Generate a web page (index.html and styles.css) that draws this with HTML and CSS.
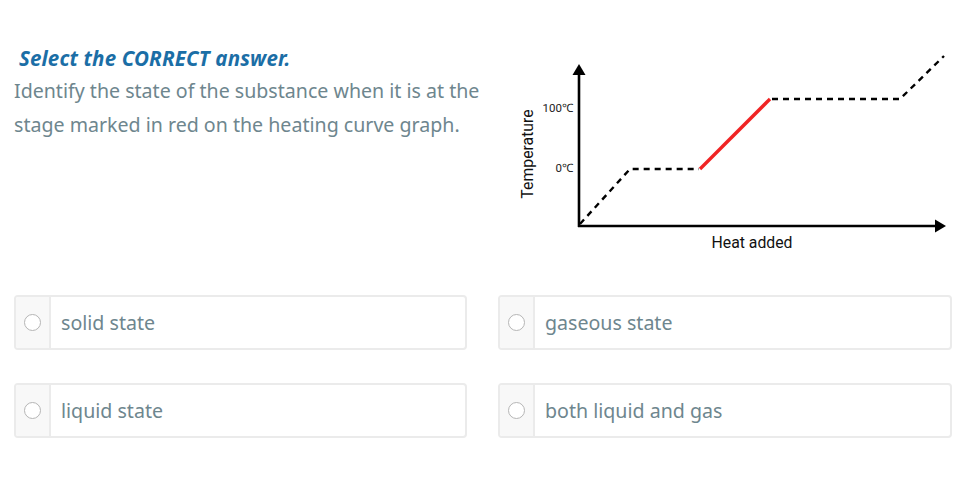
FILE: index.html
```html
<!DOCTYPE html>
<html lang="en">
<head>
  <meta charset="UTF-8" />
  <meta name="viewport" content="width=device-width, initial-scale=1" />
  <title>Heating curve question</title>
  <link rel="stylesheet" href="styles.css">
</head>
<body>
  <div class="question">
    <div class="prompt">
      <div class="prompt-text">
        <h2 class="instruction">Select the CORRECT answer.</h2>
        <p class="stem">Identify the state of the substance when it is at the stage marked in red on the heating curve graph.</p>
      </div>

      <!-- heating curve graph -->
      <svg class="graph" width="440" height="215" viewBox="0 0 440 215">
        <line x1="69" y1="185" x2="69" y2="32" stroke="#000" stroke-width="2.6" />
        <polygon points="62.5,33 75.5,33 69,22" fill="#000" />
        <line x1="68" y1="184" x2="426" y2="184" stroke="#000" stroke-width="2.6" />
        <polygon points="425,177.5 425,190.5 436,184" fill="#000" />

        <polyline points="70,182 120,127 189,127" fill="none" stroke="#000" stroke-width="2.4" stroke-dasharray="6 5" />
        <line x1="190" y1="127" x2="260" y2="57" stroke="#f02424" stroke-width="3.4" />
        <polyline points="262,57 390,57 434,14" fill="none" stroke="#000" stroke-width="2.4" stroke-dasharray="6 5" />

        <text class="tick" x="63" y="70" text-anchor="end">100℃</text>
        <text class="tick" x="63" y="130" text-anchor="end">0℃</text>
        <text class="axis-label" x="0" y="0" text-anchor="middle" transform="translate(23 112) rotate(-90)">Temperature</text>
        <text class="axis-label" x="242" y="206" text-anchor="middle">Heat added</text>
      </svg>
    </div>

    <div class="choices">
      <label class="choice">
        <span class="choice-mark"><span class="radio"></span></span>
        <span class="choice-text">solid state</span>
      </label>
      <label class="choice">
        <span class="choice-mark"><span class="radio"></span></span>
        <span class="choice-text">gaseous state</span>
      </label>
      <label class="choice">
        <span class="choice-mark"><span class="radio"></span></span>
        <span class="choice-text">liquid state</span>
      </label>
      <label class="choice">
        <span class="choice-mark"><span class="radio"></span></span>
        <span class="choice-text">both liquid and gas</span>
      </label>
    </div>
  </div>
</body>
</html>
```

FILE: styles.css
```css
body {
  margin: 0;
  background: #fff;
  font-family: "Noto Sans", "Open Sans", sans-serif;
}

.question {
  padding: 42px 4px 0 14px;
}

.prompt {
  display: flex;
  align-items: flex-start;
}

.prompt-text {
  width: 482px;
  flex: none;
}

.instruction {
  margin: 0 0 0 5px;
  font-size: 20.5px;
  line-height: 32px;
  font-weight: 700;
  font-style: italic;
  color: #1b6ea6;
  letter-spacing: 0.15px;
}

.stem {
  margin: 0;
  font-size: 19.6px;
  line-height: 34px;
  color: #6e868e;
}

.graph {
  display: block;
  margin-left: 14px;
  flex: none;
}

.tick {
  font-family: Roboto, sans-serif;
  font-size: 11.5px;
  fill: #222;
}

.axis-label {
  font-family: Roboto, sans-serif;
  font-size: 15.8px;
  fill: #111;
}

.choices {
  display: grid;
  grid-template-columns: 453px 454px;
  column-gap: 31px;
  row-gap: 33px;
  margin-top: 38px;
}

.choice {
  display: flex;
  height: 55px;
  box-sizing: border-box;
  border: 2px solid #ebebeb;
  border-radius: 4px;
  overflow: hidden;
  cursor: pointer;
}

.choice-mark {
  display: flex;
  align-items: center;
  justify-content: center;
  width: 33px;
  background: #f8f8f8;
  border-right: 2px solid #ebebeb;
}

.radio {
  width: 15px;
  height: 15px;
  border: 1px solid #b5b5b5;
  border-radius: 50%;
  background: #fff;
}

.choice-text {
  display: flex;
  align-items: center;
  padding-left: 10px;
  font-size: 19.6px;
  color: #6e868e;
}
```
